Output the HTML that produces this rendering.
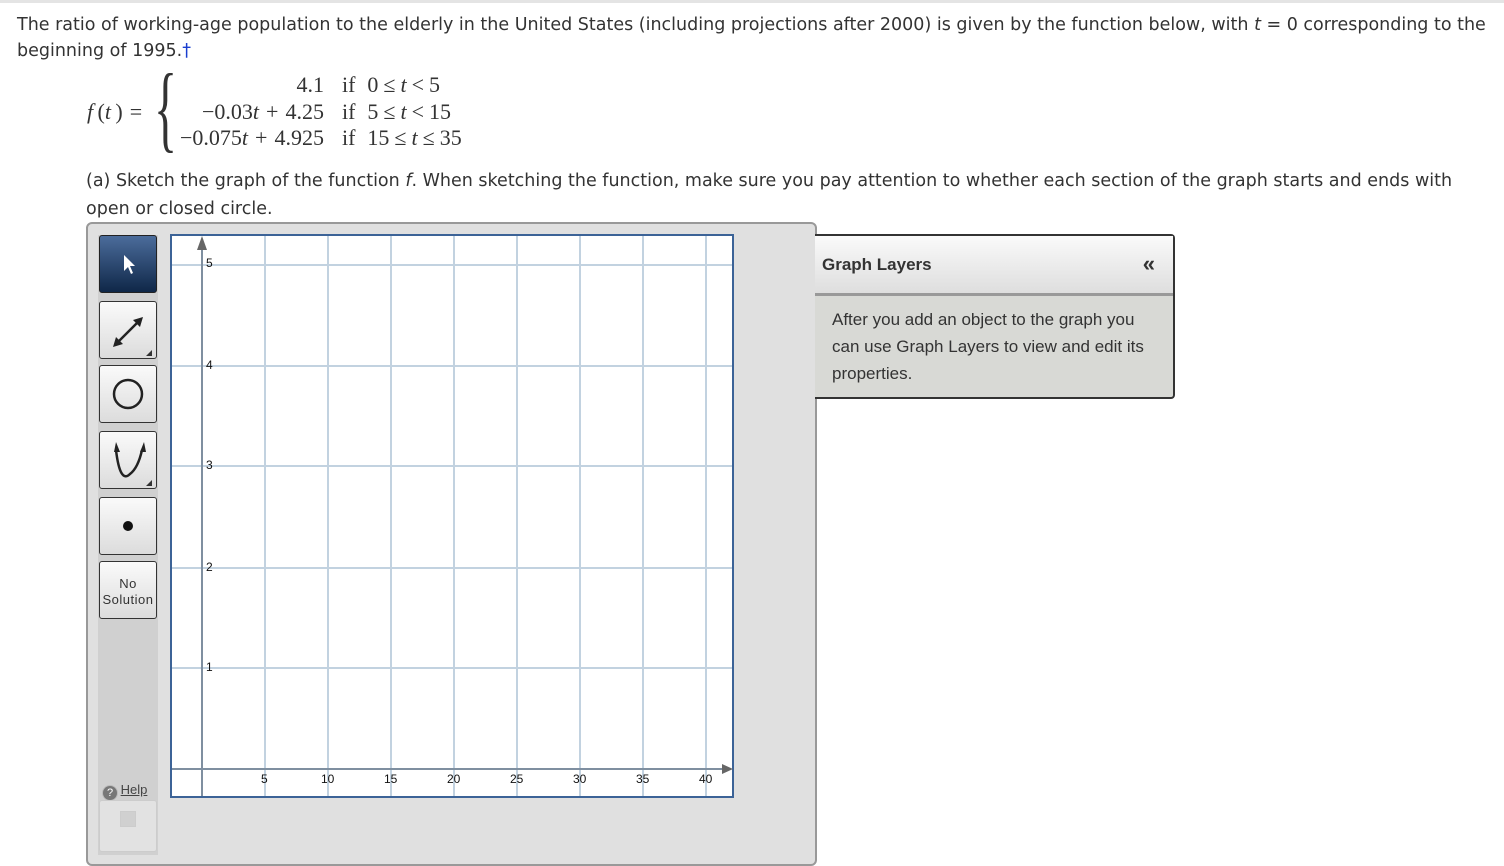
<!DOCTYPE html>
<html><head><meta charset="utf-8"><style>
body{margin:0;width:1504px;height:844px;overflow:hidden;background:#fff;font-family:"DejaVu Sans","Liberation Sans",sans-serif;color:#333;position:relative}
.t{position:absolute;white-space:nowrap;font-size:17.5px}
.math{position:absolute;font-family:"Liberation Serif",serif;font-size:22px;color:#333;white-space:nowrap}
.btn{position:absolute;left:99px;width:56px;height:56px;border:1px solid #333;border-radius:3px;background:linear-gradient(#fafafa,#dcdcdc)}
.lay{font-family:"Liberation Sans",sans-serif}
.o{display:inline-block;padding:0 7px}
.r{display:inline-block;padding:0 5px}
</style></head><body>
<div style="position:absolute;left:0;top:0;width:1504px;height:3px;background:#e4e4e4"></div>
<div class="t" style="left:17px;top:15px">The ratio of working-age population to the elderly in the United States (including projections after 2000) is given by the function below, with <i>t</i> = 0 corresponding to the</div>
<div class="t" style="left:17px;top:41px">beginning of 1995.<span style="color:#1a3ecf">†</span></div>

<div class="math" style="left:87px;top:99px"><i>f</i>&thinsp;(<i>t</i>&thinsp;)<span class="o">=</span></div>
<div class="math" style="left:154px;top:60px;font-size:96px;transform:scaleX(0.5);transform-origin:left top;line-height:96px">{</div>
<div class="math" style="left:180px;top:72px;line-height:26.5px">
<table style="border-collapse:collapse;font:inherit;color:inherit"><tr><td style="text-align:right;padding:0">4.1</td><td style="padding:0 0 0 18px">if</td><td style="padding:0 0 0 12px">0<span class="r">≤</span><i>t</i><span class="r">&lt;</span>5</td></tr>
<tr><td style="text-align:right;padding:0">−0.03<i>t</i><span class="o">+</span>4.25</td><td style="padding:0 0 0 18px">if</td><td style="padding:0 0 0 12px">5<span class="r">≤</span><i>t</i><span class="r">&lt;</span>15</td></tr>
<tr><td style="text-align:right;padding:0">−0.075<i>t</i><span class="o">+</span>4.925</td><td style="padding:0 0 0 18px">if</td><td style="padding:0 0 0 12px">15<span class="r">≤</span><i>t</i><span class="r">≤</span>35</td></tr></table></div>

<div class="t" style="left:86px;top:171px">(a) Sketch the graph of the function <i>f</i>. When sketching the function, make sure you pay attention to whether each section of the graph starts and ends with</div>
<div class="t" style="left:86px;top:199px">open or closed circle.</div>

<div style="position:absolute;left:86px;top:222px;width:727px;height:640px;background:#e0e0e0;border:2px solid #999;border-radius:6px"></div>
<div style="position:absolute;left:98px;top:235px;width:60px;height:620px;background:#d0d0d0"></div>
<div class="btn" style="top:235px;background:linear-gradient(#4b6c9b,#0f2748);border-color:#222"><svg width="56" height="56"><path d="M24 19 L24 35 L28 31 L31 38 L33 37 L30 30 L35 30 Z" fill="#fff"/></svg></div>
<div class="btn" style="top:301px"><svg width="56" height="56"><path d="M16 42 L40 18" stroke="#222" stroke-width="2.5"/><path d="M13 45 L16 35 L23 42Z M43 15 L40 25 L33 18Z" fill="#222"/><path d="M52 48 L46 54 L52 54Z" fill="#333"/></svg></div>
<div class="btn" style="top:365px"><svg width="56" height="56"><circle cx="28" cy="28" r="14" fill="none" stroke="#222" stroke-width="2.5"/></svg></div>
<div class="btn" style="top:431px"><svg width="56" height="56"><path d="M16 18 Q20 52 30 42 Q38 36 42 18" fill="none" stroke="#222" stroke-width="2.5"/><path d="M14 20 L16 10 L20 20Z M40 20 L44 10 L46 20Z" fill="#222"/><path d="M52 48 L46 54 L52 54Z" fill="#333"/></svg></div>
<div class="btn" style="top:497px"><svg width="56" height="56"><circle cx="28" cy="28" r="5" fill="#111"/></svg></div>
<div class="btn" style="top:561px;font-family:'Liberation Sans',sans-serif;font-size:13px;text-align:center;line-height:16px;color:#333;letter-spacing:0.5px"><div style="padding-top:14px">No<br>Solution</div></div>
<div style="position:absolute;left:103px;top:782px;font-family:'Liberation Sans',sans-serif;font-size:13px;color:#444"><span style="display:inline-block;width:14px;height:14px;border-radius:50%;background:#777;color:#fff;font-size:11px;text-align:center;line-height:14px;vertical-align:-2px;box-shadow:0 0 0 1px #bbb">?</span> <u>Help</u></div>
<div style="position:absolute;left:99px;top:800px;width:56px;height:50px;border:1px solid #ccc;border-radius:3px;background:#e2e2e2"><div style="margin:10px auto;width:14px;height:14px;background:#d0d0d0;border:1px solid #ccc"></div></div>

<svg style="position:absolute;left:170px;top:234px" width="565" height="565">
<rect x="1" y="1" width="562" height="562" fill="#fff" stroke="#3c6397" stroke-width="2"/>
<g stroke="#c2d2e0" stroke-width="2">
<line x1="95" y1="2" x2="95" y2="562"/><line x1="158" y1="2" x2="158" y2="562"/><line x1="221" y1="2" x2="221" y2="562"/><line x1="284" y1="2" x2="284" y2="562"/><line x1="347" y1="2" x2="347" y2="562"/><line x1="410" y1="2" x2="410" y2="562"/><line x1="473" y1="2" x2="473" y2="562"/><line x1="536" y1="2" x2="536" y2="562"/>
<line x1="2" y1="31" x2="562" y2="31"/><line x1="2" y1="132" x2="562" y2="132"/><line x1="2" y1="232" x2="562" y2="232"/><line x1="2" y1="334" x2="562" y2="334"/><line x1="2" y1="434" x2="562" y2="434"/>
</g>
<g stroke="#7f8fa0" stroke-width="2"><line x1="32" y1="10" x2="32" y2="562"/><line x1="2" y1="535" x2="556" y2="535"/></g>
<path d="M27 16 L32 2 L37 16Z" fill="#666"/><path d="M552 530 L563 535 L552 540Z" fill="#666"/>
<g font-family="Liberation Sans,sans-serif" font-size="12" fill="#111">
<text x="36" y="33">5</text><text x="36" y="135">4</text><text x="36" y="235">3</text><text x="36" y="337">2</text><text x="36" y="437">1</text>
<text x="91" y="549">5</text><text x="151" y="549">10</text><text x="214" y="549">15</text><text x="277" y="549">20</text><text x="340" y="549">25</text><text x="403" y="549">30</text><text x="466" y="549">35</text><text x="529" y="549">40</text></g>
</svg>

<div class="lay" style="position:absolute;left:815px;top:234px;width:358px;height:161px;border:2px solid #333;border-left:none;border-radius:0 4px 4px 0;background:#d8d9d5">
<div style="height:57px;background:linear-gradient(#fafafa,#dedede);border-bottom:3px solid #999;position:relative">
<div style="position:absolute;left:7px;top:19px;font-size:17px;font-weight:bold;color:#333">Graph Layers</div>
<div style="position:absolute;right:18px;top:15px;font-size:22px;font-weight:bold;color:#333">«</div></div>
<div style="padding:10px 0 0 17px;font-size:17px;line-height:27px;color:#333">After you add an object to the graph you<br>can use Graph Layers to view and edit its<br>properties.</div>
</div>
</body></html>
